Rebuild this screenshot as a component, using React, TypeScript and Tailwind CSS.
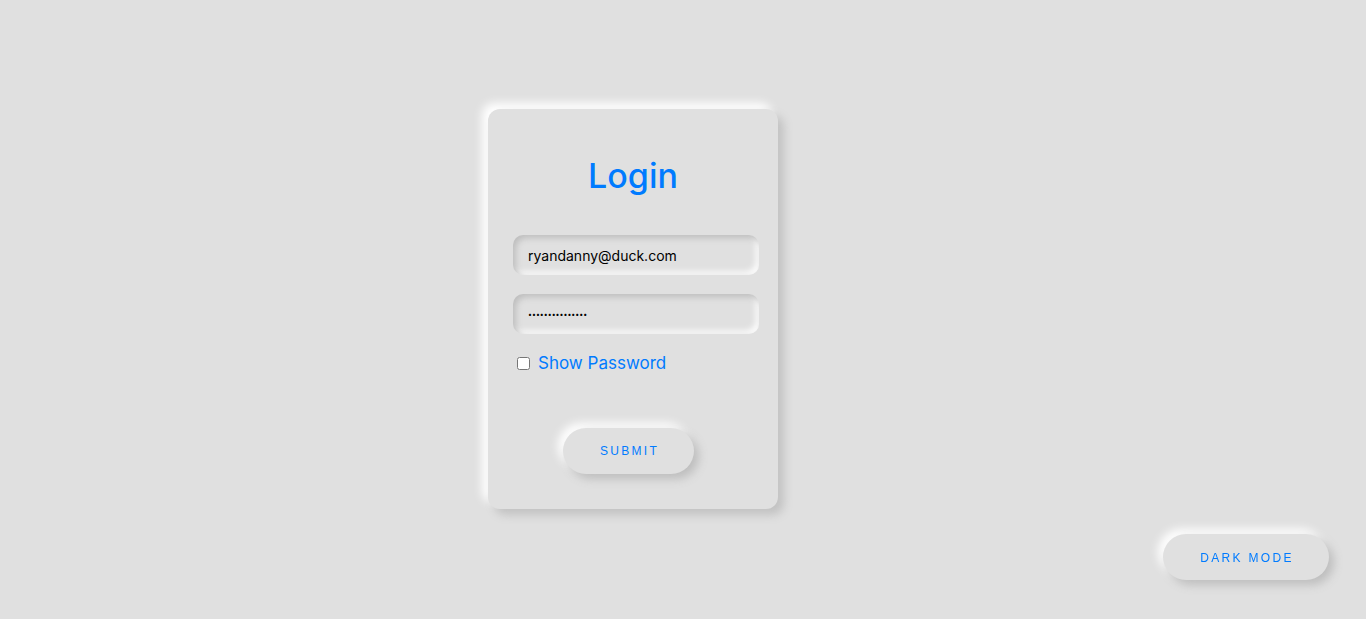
import { useState } from 'react'

const App = () => {
  const [showPassword, setShowPassword] = useState(false)

  return (
    <div className="min-h-screen bg-[#e0e0e0] pt-[109px] pl-[488px] font-['Inter',sans-serif]">
      {/* Login card */}
      <div className="w-[290px] h-[400px] rounded-[12px] bg-[#e0e0e0] shadow-[6px_6px_10px_#c2c2c2,-6px_-6px_10px_#ffffff] flex flex-col pl-[25px] pr-[19px]">
        <h1 className="mt-[47px] text-center text-[34px] leading-[40px] font-medium text-[#007bff] pr-[6px]">
          Login
        </h1>

        <input
          type="text"
          readOnly
          value="ryandanny@duck.com"
          className="mt-[39px] w-[246px] h-[40px] rounded-[10px] bg-[#e0e0e0] px-[15px] text-[14px] text-black outline-none shadow-[inset_3px_3px_6px_#bdbdbd,inset_-3px_-3px_6px_#ffffff]"
        />
        <input
          type={showPassword ? 'text' : 'password'}
          readOnly
          value="ryandanny123456"
          className={`mt-[19px] w-[246px] h-[40px] rounded-[10px] bg-[#e0e0e0] px-[15px] text-black outline-none shadow-[inset_3px_3px_6px_#bdbdbd,inset_-3px_-3px_6px_#ffffff] ${showPassword ? 'text-[14px]' : 'text-[7px]'}`}
        />

        <label className="mt-[19px] flex items-center gap-[8px] pl-[4px] cursor-pointer">
          <input
            type="checkbox"
            checked={showPassword}
            onChange={() => setShowPassword(!showPassword)}
            className="w-[13px] h-[13px] m-0"
          />
          <span className="text-[17px] leading-[20px] text-[#007bff]">Show Password</span>
        </label>

        <div className="mt-[55px] pl-[50px]">
          <button className="w-[131px] h-[46px] rounded-full bg-[#e0e0e0] pl-[2px] text-[12px] tracking-[2.3px] text-[#007bff] font-['Liberation_Sans',sans-serif] shadow-[5px_5px_10px_#bebebe,-5px_-5px_10px_#ffffff]">
            SUBMIT
          </button>
        </div>
      </div>

      {/* Theme toggle */}
      <button className="fixed bottom-[39px] right-[37px] w-[166px] h-[46px] rounded-full bg-[#e0e0e0] pl-[2px] pt-[2px] text-[12px] tracking-[2.3px] text-[#007bff] font-['Liberation_Sans',sans-serif] shadow-[5px_5px_10px_#bebebe,-5px_-5px_10px_#ffffff]">
        DARK MODE
      </button>
    </div>
  )
}

export default App
